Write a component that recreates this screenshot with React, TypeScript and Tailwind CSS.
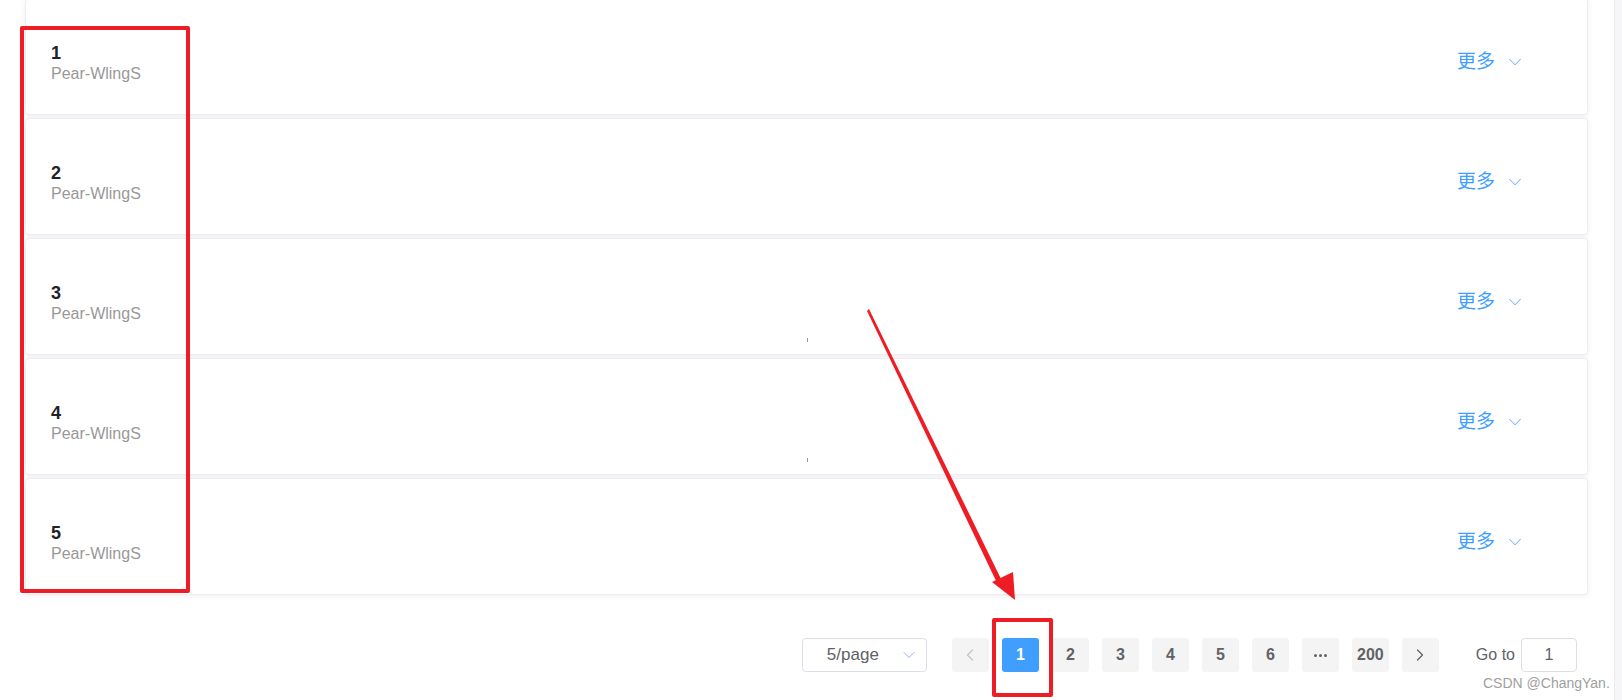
import { ChevronDown, ChevronLeft, ChevronRight } from 'lucide-react'

const rows = [1, 2, 3, 4, 5]
const pages = ['2', '3', '4', '5', '6', '...', '200']

const font = { fontFamily: '"Liberation Sans", "Noto Sans CJK SC", sans-serif' }

const RowCard = ({ n }: { n: number }) => (
  <div className="h-[117px] flex justify-between bg-white rounded-[4px] border border-[#eceef4] shadow-[0_1px_6px_0_rgba(0,0,0,0.07)]">
    <div className="flex flex-col pl-[25px] pt-[43px]">
      <span className="text-[18px] leading-[22px] font-bold text-[#1f2329]">{n}</span>
      <span className="text-[16px] leading-[20px] text-[#999999]">Pear-WlingS</span>
    </div>
    <div className="flex items-center gap-[9px] pr-[61px] mt-[52px] self-start text-[#409eff]">
      <span className="text-[19px] leading-[22px]">更多</span>
      <ChevronDown className="w-[22px] h-[22px] text-[#7fb2f5]" strokeWidth={1.1} />
    </div>
  </div>
)

export default function App() {
  return (
    <div className="relative w-[1622px] h-[700px] flex overflow-hidden bg-white" style={font}>
      <div className="w-[1615px] h-full border-r border-[#ececec] bg-white">
        <div className="flex flex-col gap-[3px] pl-[25px] pr-[26px] -mt-[2px]">
          {rows.map((n) => (
            <RowCard key={n} n={n} />
          ))}
        </div>
        <div className="flex justify-end items-center mt-[43px] pr-[37px]">
          <div className="w-[125px] h-[34px] flex items-center justify-between pl-[24px] pr-[7px] border border-[#dcdfe6] rounded-[4px] text-[17px] text-[#606266]">
            <span>5/page</span>
            <ChevronDown className="w-[20px] h-[20px] text-[#8fb5f0]" strokeWidth={1.2} />
          </div>
          <div className="flex gap-[13px] ml-[25px]">
            <div className="w-[37px] h-[34px] flex items-center justify-center rounded-[3px] bg-[#f4f4f5] text-[#c0c4cc]">
              <ChevronLeft className="w-[20px] h-[20px]" strokeWidth={1.5} />
            </div>
            <div className="w-[37px] h-[34px] flex items-center justify-center rounded-[3px] bg-[#409eff] text-white text-[16px] font-bold">
              1
            </div>
            {pages.map((p) => (
              <div
                key={p}
                className="w-[37px] h-[34px] flex items-center justify-center rounded-[3px] bg-[#f4f4f5] text-[#606266] text-[16px] font-bold"
              >
                {p === '...' ? (
                  <span className="flex gap-[2px]">
                    <span className="w-[3px] h-[3px] rounded-full bg-[#606266]" />
                    <span className="w-[3px] h-[3px] rounded-full bg-[#606266]" />
                    <span className="w-[3px] h-[3px] rounded-full bg-[#606266]" />
                  </span>
                ) : (
                  p
                )}
              </div>
            ))}
            <div className="w-[37px] h-[34px] flex items-center justify-center rounded-[3px] bg-[#f4f4f5] text-[#606266]">
              <ChevronRight className="w-[20px] h-[20px]" strokeWidth={1.5} />
            </div>
          </div>
          <span className="ml-[37px] text-[16px] text-[#606266]">Go to</span>
          <div className="ml-[6px] w-[56px] h-[34px] flex items-center justify-center border border-[#dcdfe6] rounded-[4px] text-[16px] text-[#606266]">
            1
          </div>
        </div>
      </div>
      <div className="flex-1 bg-[#f6f6f8]" />

      {/* annotations */}
      <div className="absolute left-[20px] top-[26px] w-[170px] h-[567px] border-[4px] border-[#ee1d25] rounded-[2px]" />
      <div className="absolute left-[992px] top-[618px] w-[61px] h-[79px] border-[4px] border-[#ee1d25] rounded-[2px]" />
      <svg className="absolute left-0 top-0 pointer-events-none" width="1622" height="700">
        <polygon points="867,311 869,309 1003,583 998,585" fill="#ee1d25" />
        <polygon points="992,582 1013,572 1015,600" fill="#ee1d25" />
      </svg>
      <div className="absolute left-[807px] top-[338px] w-px h-[4px] bg-[#999]" />
      <div className="absolute left-[807px] top-[458px] w-px h-[4px] bg-[#999]" />
      <span className="absolute left-[1483px] top-[675px] text-[14px] leading-[16px] text-[#a0a0a0]">CSDN @ChangYan.</span>
    </div>
  )
}
